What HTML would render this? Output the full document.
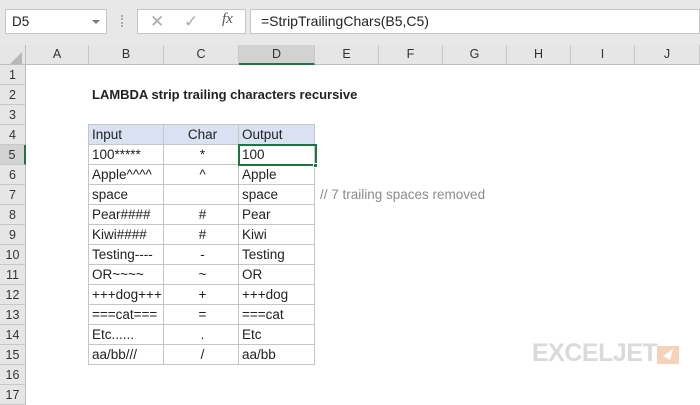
<!DOCTYPE html><html><head><style>
*{margin:0;padding:0;box-sizing:border-box}
body{width:700px;height:400px;overflow:hidden;background:#fff;font-family:"Liberation Sans",sans-serif;position:relative;font-size:13.5px;color:#222}
.a{position:absolute}
.ch{position:absolute;top:45px;height:20px;background:#e6e6e6;border-right:1px solid #c8c8c8;border-bottom:1px solid #bdbdbd;text-align:center;line-height:19px;font-size:12.5px;color:#333}
.rh{position:absolute;left:0;width:26px;height:20px;background:#e6e6e6;border-bottom:1px solid #c8c8c8;border-right:1px solid #bdbdbd;text-align:center;line-height:20px;font-size:12.5px;color:#333}
.c{position:absolute;height:20px;line-height:20px;padding-left:3px;border-right:1px solid #c6c6c6;border-bottom:1px solid #c6c6c6;white-space:nowrap}
</style></head><body>
<div class="a" style="left:0;top:0;width:700px;height:45px;background:#e8e8e8"></div>
<div class="a" style="left:5px;top:9px;width:102px;height:25px;background:#fff;border:1px solid #c6c6c6;padding-left:6px;line-height:23px">D5</div>
<div class="a" style="left:92px;top:20px;width:0;height:0;border-left:4px solid transparent;border-right:4px solid transparent;border-top:4px solid #777"></div>
<div class="a" style="left:121px;top:15px;width:2px;height:12px;border-left:2px dotted #aaa"></div>
<div class="a" style="left:137px;top:9px;width:109px;height:25px;background:#fff;border:1px solid #c6c6c6"></div>
<div class="a" style="left:150px;top:12px;color:#aaa;font-size:17px">✕</div>
<div class="a" style="left:184px;top:12px;color:#aaa;font-size:17px">✓</div>
<div class="a" style="left:222px;top:11px;color:#555;font-style:italic;font-family:'Liberation Serif',serif;font-size:15px">fx</div>
<div class="a" style="left:250px;top:9px;width:450px;height:25px;background:#fff;border:1px solid #c6c6c6;padding-left:10px;line-height:23px;font-size:14px">=StripTrailingChars(B5,C5)</div>
<div class="a" style="left:0;top:45px;width:26px;height:20px;background:#e6e6e6;border-right:1px solid #bdbdbd;border-bottom:1px solid #bdbdbd"></div>
<div class="a" style="left:10px;top:52px;width:0;height:0;border-left:12px solid transparent;border-bottom:12px solid #b8b8b8"></div>
<div class="ch" style="left:26px;width:63px">A</div>
<div class="ch" style="left:89px;width:75px">B</div>
<div class="ch" style="left:164px;width:75px">C</div>
<div class="ch" style="left:239px;width:76px;background:#d2d2d2;border-bottom:2px solid #217346">D</div>
<div class="ch" style="left:315px;width:64px">E</div>
<div class="ch" style="left:379px;width:64px">F</div>
<div class="ch" style="left:443px;width:64px">G</div>
<div class="ch" style="left:507px;width:64px">H</div>
<div class="ch" style="left:571px;width:64px">I</div>
<div class="ch" style="left:635px;width:65px">J</div>
<div class="rh" style="top:65px">1</div><div class="rh" style="top:85px">2</div><div class="rh" style="top:105px">3</div><div class="rh" style="top:125px">4</div>
<div class="rh" style="top:145px;background:#d2d2d2;border-right:2px solid #217346">5</div>
<div class="rh" style="top:165px">6</div><div class="rh" style="top:185px">7</div><div class="rh" style="top:205px">8</div><div class="rh" style="top:225px">9</div><div class="rh" style="top:245px">10</div><div class="rh" style="top:265px">11</div><div class="rh" style="top:285px">12</div><div class="rh" style="top:305px">13</div><div class="rh" style="top:325px">14</div><div class="rh" style="top:345px">15</div><div class="rh" style="top:365px">16</div><div class="rh" style="top:385px">17</div>
<div class="a" style="left:92px;top:85px;line-height:20px;font-weight:bold;font-size:13px">LAMBDA strip trailing characters recursive</div>
<div class="a" style="left:89px;top:124px;width:226px;height:1px;background:#c6c6c6"></div>
<div class="a" style="left:88px;top:124px;width:1px;height:241px;background:#c6c6c6"></div>
<div class="c" style="left:89px;top:125px;width:75px;background:#d9e1f2">Input</div>
<div class="c" style="left:164px;top:125px;width:75px;background:#d9e1f2;text-align:center">Char</div>
<div class="c" style="left:239px;top:125px;width:76px;background:#d9e1f2">Output</div>
<div class="c" style="left:89px;top:145px;width:75px">100*****</div><div class="c" style="left:164px;top:145px;width:75px;text-align:center">*</div><div class="c" style="left:239px;top:145px;width:76px">100</div>
<div class="c" style="left:89px;top:165px;width:75px">Apple^^^^</div><div class="c" style="left:164px;top:165px;width:75px;text-align:center">^</div><div class="c" style="left:239px;top:165px;width:76px">Apple</div>
<div class="c" style="left:89px;top:185px;width:75px">space</div><div class="c" style="left:164px;top:185px;width:75px;text-align:center"></div><div class="c" style="left:239px;top:185px;width:76px">space</div>
<div class="c" style="left:89px;top:205px;width:75px">Pear####</div><div class="c" style="left:164px;top:205px;width:75px;text-align:center">#</div><div class="c" style="left:239px;top:205px;width:76px">Pear</div>
<div class="c" style="left:89px;top:225px;width:75px">Kiwi####</div><div class="c" style="left:164px;top:225px;width:75px;text-align:center">#</div><div class="c" style="left:239px;top:225px;width:76px">Kiwi</div>
<div class="c" style="left:89px;top:245px;width:75px">Testing----</div><div class="c" style="left:164px;top:245px;width:75px;text-align:center">-</div><div class="c" style="left:239px;top:245px;width:76px">Testing</div>
<div class="c" style="left:89px;top:265px;width:75px">OR~~~~</div><div class="c" style="left:164px;top:265px;width:75px;text-align:center">~</div><div class="c" style="left:239px;top:265px;width:76px">OR</div>
<div class="c" style="left:89px;top:285px;width:75px">+++dog+++</div><div class="c" style="left:164px;top:285px;width:75px;text-align:center">+</div><div class="c" style="left:239px;top:285px;width:76px">+++dog</div>
<div class="c" style="left:89px;top:305px;width:75px">===cat===</div><div class="c" style="left:164px;top:305px;width:75px;text-align:center">=</div><div class="c" style="left:239px;top:305px;width:76px">===cat</div>
<div class="c" style="left:89px;top:325px;width:75px">Etc......</div><div class="c" style="left:164px;top:325px;width:75px;text-align:center">.</div><div class="c" style="left:239px;top:325px;width:76px">Etc</div>
<div class="c" style="left:89px;top:345px;width:75px">aa/bb///</div><div class="c" style="left:164px;top:345px;width:75px;text-align:center">/</div><div class="c" style="left:239px;top:345px;width:76px">aa/bb</div>
<div class="a" style="left:238px;top:144px;width:79px;height:22px;border:2px solid #217346"></div>
<div class="a" style="left:313px;top:163px;width:5px;height:5px;background:#217346;border:1px solid #fff"></div>
<div class="a" style="left:320px;top:185px;line-height:20px;color:#8c8c8c">// 7 trailing spaces removed</div>
<div class="a" style="left:532px;top:338px;font-weight:bold;font-size:25px;color:#dadada;letter-spacing:-0.5px;line-height:30px">EXCELJET</div>
<div class="a" style="left:657px;top:346px;width:22px;height:18px;background:#f6d3b8"></div>
<svg class="a" style="left:657px;top:346px" width="22" height="18"><path d="M16 3 L6 10 L13 14 Z" fill="#fff"/></svg>
</body></html>
